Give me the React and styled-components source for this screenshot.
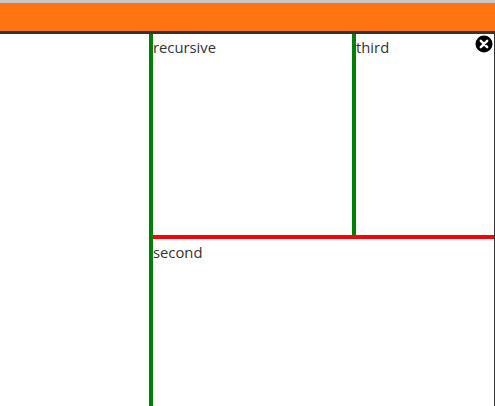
import React from 'react'
import styled, { createGlobalStyle } from 'styled-components'

const GlobalStyle = createGlobalStyle`
  html, body, #root {
    height: 100%;
  }
  body {
    margin: 0;
    background: #fff;
    color: #333;
    font-family: "Open Sans", "Noto Sans", sans-serif;
    font-size: 14.8px;
    overflow: hidden;
  }
`

const Page = styled.div`
  display: flex;
  flex-direction: column;
  height: 100%;
  box-sizing: border-box;
  border-top: 3px solid #c8c8c8;
`

const Toolbar = styled.div`
  flex: none;
  height: 28px;
  background: #ff7512;
  border-bottom: 3px solid #333;
`

const Workspace = styled.div`
  flex: 1;
  display: flex;
  min-height: 0;
  border-right: 1px solid #333;
`

const Pane = styled.div`
  position: relative;
  box-sizing: border-box;
  min-width: 0;
  min-height: 0;
  flex: ${props => props.$flex || '1'};
  line-height: 26px;
`

const Column = styled.div`
  flex: 1;
  min-width: 0;
  display: flex;
  flex-direction: column;
`

const Row = styled.div`
  flex: ${props => props.$flex || '1'};
  display: flex;
  min-height: 0;
`

const Splitter = styled.div`
  flex: none;
  background: ${props => props.$color};
  ${props => (props.$horizontal ? 'height: 4px;' : 'width: 4px;')}
`

const CloseButton = styled.button`
  position: absolute;
  top: 1px;
  right: 1px;
  width: 18px;
  height: 18px;
  padding: 0;
  border: 0;
  background: none;
  display: block;
`

const CloseIcon = () => (
  <svg width="18" height="18" viewBox="0 0 18 18">
    <circle cx="9" cy="9" r="8.5" fill="#000" />
    <path d="M5.8 5.8 12.2 12.2M12.2 5.8 5.8 12.2" stroke="#fff" strokeWidth="2.4" strokeLinecap="round" />
  </svg>
)

export default function App() {
  return (
    <Page>
      <GlobalStyle />
      <Toolbar />
      <Workspace>
        <Pane $flex="0 0 149px" />
        <Splitter $color="green" />
        <Column>
          <Row $flex="0 0 201px">
            <Pane $flex="0 0 199px">recursive</Pane>
            <Splitter $color="green" />
            <Pane>
              third
              <CloseButton aria-label="close">
                <CloseIcon />
              </CloseButton>
            </Pane>
          </Row>
          <Splitter $color="red" $horizontal />
          <Pane>second</Pane>
        </Column>
      </Workspace>
    </Page>
  )
}
